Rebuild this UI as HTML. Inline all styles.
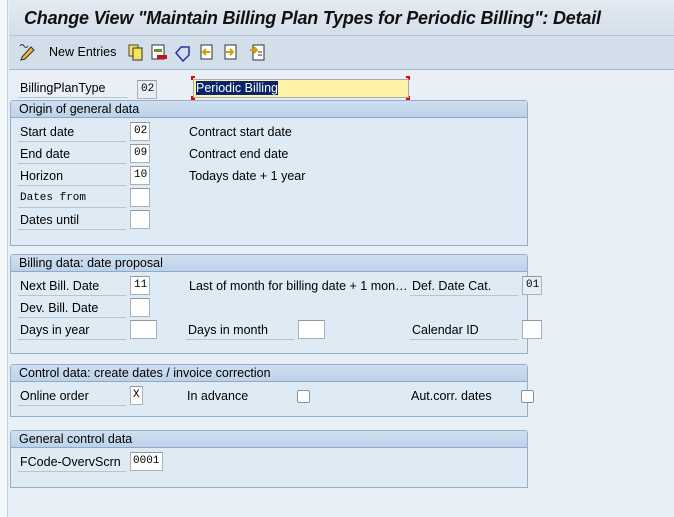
<!DOCTYPE html>
<html><head><style>
*{margin:0;padding:0;box-sizing:border-box}
body{width:674px;height:517px;overflow:hidden;background:#e8eff7;font-family:"Liberation Sans","DejaVu Sans",sans-serif;font-size:12.5px;color:#000;position:relative}
.a{position:absolute}
.strip{left:0;top:0;width:8px;height:517px;background:#f4f7fa;border-right:1px solid #c9d4df}
.title{left:9px;top:0;width:665px;height:36px;background:linear-gradient(#e3eaf2,#d4dfea);border-bottom:1px solid #b5c4d3}
.title span{position:absolute;left:15px;top:8px;font-size:18px;font-weight:bold;font-style:italic;color:#111;letter-spacing:-0.2px}
.tb{left:9px;top:36px;width:665px;height:34px;background:#d2dee9;border-bottom:1px solid #a9b9c9}
.lbl{height:19px;line-height:19px;border-bottom:1px solid #b9c4cf;padding-left:2px}
.f{height:19px;background:#fff;border:1px solid #a9b2bc;border-top-color:#8e98a3;font-family:"Liberation Mono",monospace;font-size:11px;line-height:17px;padding-left:3px}
.ro{background:#e9eef4}
.grp{border:1px solid #97aec8;border-radius:3px 3px 0 0;background:#deeaf4}
.gh{height:17px;background:linear-gradient(#cfdff0,#bcd2ea);border-bottom:1px solid #91a9c3;padding-left:8px;line-height:16px}
.cb{width:13px;height:13px;background:#fff;border:1px solid #8a949e;border-radius:2px}
.txt{line-height:19px}
.br{position:absolute;width:4px;height:4px;border-color:#e00;border-style:solid}
</style></head><body>
<div class="a strip"></div>
<div class="a title"><span>Change View "Maintain Billing Plan Types for Periodic Billing": Detail</span></div>
<div class="a tb">
<svg class="a" style="left:10px;top:7px" width="18" height="18" viewBox="0 0 18 18"><path d="M3 14 L12 4 L15 7 L6 16 L2 17 Z" fill="#f4b33a" stroke="#333" stroke-width="1"/><path d="M1 3 q2-3 4 0 q2 3 4 0" fill="none" stroke="#333"/></svg>
<div class="a txt" style="left:40px;top:7px">New Entries</div>
<svg class="a" style="left:119px;top:8px" width="120" height="18" viewBox="0 0 120 18">
<rect x="1" y="1" width="9" height="11" fill="#f7e35a" stroke="#444"/><rect x="5" y="4" width="9" height="12" fill="#f7e35a" stroke="#333"/>
<rect x="24" y="1" width="12" height="14" fill="#fff" stroke="#333"/><rect x="26" y="5" width="8" height="3" fill="#6b8e3a"/><rect x="29" y="11" width="10" height="4" fill="#d01010"/>
<path d="M48 9 l5-6 l8 0 l0 8 l-6 6 z" fill="none" stroke="#2233aa" stroke-width="1.5"/>
<rect x="73" y="1" width="11" height="14" fill="#fff" stroke="#333"/><path d="M82 8 h-7 m3-3 l-3 3 l3 3" stroke="#d4a000" stroke-width="2" fill="none"/>
<rect x="97" y="1" width="11" height="14" fill="#fff" stroke="#333"/><path d="M98 8 h7 m-3-3 l3 3 l-3 3" stroke="#d4a000" stroke-width="2" fill="none"/>
</svg>
<svg class="a" style="left:240px;top:8px" width="16" height="18"><rect x="4" y="1" width="11" height="15" fill="#fff" stroke="#333"/><path d="M1 6 h7 m-3-3 l3 3 l-3 3" stroke="#d4a000" stroke-width="2" fill="none"/><path d="M9 8h4M9 11h4" stroke="#333"/></svg>
</div>

<div class="a lbl" style="left:18px;top:79px;width:110px">BillingPlanType</div>
<div class="a f ro" style="left:137px;top:80px;width:20px">02</div>
<div class="br" style="left:191px;top:76px;border-width:2px 0 0 2px"></div>
<div class="br" style="left:191px;top:96px;border-width:0 0 2px 2px"></div>
<div class="br" style="left:406px;top:76px;border-width:2px 2px 0 0"></div>
<div class="br" style="left:406px;top:96px;border-width:0 2px 2px 0"></div>
<div class="a" style="left:193px;top:79px;width:216px;height:19px;background:#fff3a8;border:1px solid #aaa;padding:1px 2px"><span style="background:#0a246a;color:#fff;line-height:15px">Periodic Billing</span></div>

<div class="a grp" style="left:10px;top:100px;width:518px;height:146px"><div class="gh">Origin of general data</div></div>
<div class="a lbl" style="left:18px;top:123px;width:108px">Start date</div><div class="a f" style="left:130px;top:122px;width:20px">02</div><div class="a txt" style="left:189px;top:123px">Contract start date</div>
<div class="a lbl" style="left:18px;top:145px;width:108px">End date</div><div class="a f" style="left:130px;top:144px;width:20px">09</div><div class="a txt" style="left:189px;top:145px">Contract end date</div>
<div class="a lbl" style="left:18px;top:167px;width:108px">Horizon</div><div class="a f" style="left:130px;top:166px;width:20px">10</div><div class="a txt" style="left:189px;top:167px">Todays date + 1 year</div>
<div class="a lbl" style="left:18px;top:189px;width:108px;font-family:'Liberation Mono',monospace;font-size:11px">Dates from</div><div class="a f" style="left:130px;top:188px;width:20px"></div>
<div class="a lbl" style="left:18px;top:211px;width:108px">Dates until</div><div class="a f" style="left:130px;top:210px;width:20px"></div>

<div class="a grp" style="left:10px;top:254px;width:518px;height:100px"><div class="gh">Billing data: date proposal</div></div>
<div class="a lbl" style="left:18px;top:277px;width:108px">Next Bill. Date</div><div class="a f" style="left:130px;top:276px;width:20px">11</div><div class="a txt" style="left:189px;top:277px">Last of month for billing date + 1 mon…</div>
<div class="a lbl" style="left:410px;top:277px;width:108px">Def. Date Cat.</div><div class="a f ro" style="left:522px;top:276px;width:20px">01</div>
<div class="a lbl" style="left:18px;top:299px;width:108px">Dev. Bill. Date</div><div class="a f" style="left:130px;top:298px;width:20px"></div>
<div class="a lbl" style="left:18px;top:321px;width:108px">Days in year</div><div class="a f" style="left:130px;top:320px;width:27px"></div>
<div class="a lbl" style="left:186px;top:321px;width:108px">Days in month</div><div class="a f" style="left:298px;top:320px;width:27px"></div>
<div class="a lbl" style="left:410px;top:321px;width:108px">Calendar ID</div><div class="a f" style="left:522px;top:320px;width:20px"></div>

<div class="a grp" style="left:10px;top:364px;width:518px;height:53px"><div class="gh">Control data: create dates / invoice correction</div></div>
<div class="a lbl" style="left:18px;top:387px;width:108px">Online order</div><div class="a f" style="left:130px;top:386px;width:13px;padding-left:2px">X</div>
<div class="a txt" style="left:187px;top:387px">In advance</div><div class="a cb" style="left:297px;top:390px"></div>
<div class="a txt" style="left:411px;top:387px">Aut.corr. dates</div><div class="a cb" style="left:521px;top:390px"></div>

<div class="a grp" style="left:10px;top:430px;width:518px;height:58px"><div class="gh">General control data</div></div>
<div class="a lbl" style="left:18px;top:453px;width:108px">FCode-OvervScrn</div><div class="a f" style="left:130px;top:452px;width:33px;padding-left:2px">0001</div>
</body></html>
